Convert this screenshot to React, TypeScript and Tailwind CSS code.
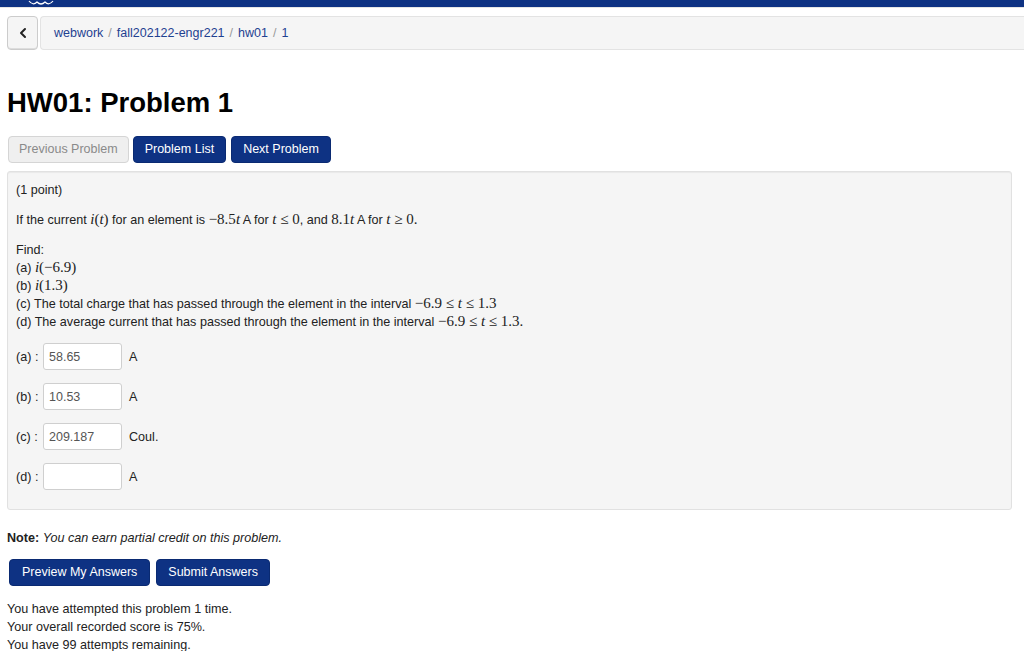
import { ChevronLeft } from 'lucide-react'

const sans = { fontFamily: '"Liberation Sans", Arial, sans-serif' }

function M({ children }: { children: React.ReactNode }) {
  return (
    <span className="text-[15px] leading-[12px]" style={{ fontFamily: '"Liberation Serif", "Times New Roman", serif' }}>
      {children}
    </span>
  )
}

function I({ children }: { children: React.ReactNode }) {
  return <i>{children}</i>
}

function BlueButton({ label, className = '' }: { label: string; className?: string }) {
  return (
    <button
      className={`h-[27px] rounded-[4px] border border-[#0a2a72] bg-[#0e3283] px-[11px] text-[12.5px] text-white ${className}`}
    >
      {label}
    </button>
  )
}

function AnswerRow({ label, value, unit }: { label: string; value: string; unit: string }) {
  return (
    <div className="flex items-center">
      <span className="w-[27px]">{label}</span>
      <div className="flex h-[27px] w-[79px] items-center rounded-[3px] border border-[#cfcfcf] bg-white px-[5px] text-[12.5px] text-[#555]">
        {value}
      </div>
      <span className="ml-[7px]">{unit}</span>
    </div>
  )
}

export default function App() {
  return (
    <div className="min-h-[651px] bg-white text-[12.6px] text-[#222]" style={sans}>
      <div className="relative h-[7px] bg-[#0e3283]">
        <svg className="absolute left-[28px] top-0" width="28" height="6" viewBox="0 0 28 6">
          <path d="M1 1 Q5 6 9 2 Q13 6 17 2 Q21 6 25 1" fill="none" stroke="#fff" strokeWidth="1.2" />
        </svg>
      </div>
      <div className="h-px bg-[#e5e5e5]" />

      <div className="mt-[8px] flex h-[34px] pl-[7px]">
        <button className="flex w-[31px] items-center justify-center rounded-[4px] border border-[#ccc] bg-[#f5f5f5] shadow-[inset_0_-1px_0_#ddd]">
          <ChevronLeft size={16} strokeWidth={3} className="text-[#222]" />
        </button>
        <div className="ml-[2px] flex flex-1 items-center rounded-l-[4px] border border-r-0 border-[#e3e3e3] bg-[#f5f5f5] pl-[13px] text-[12.5px] text-[#5a5a5a]">
          <span className="text-[#1f4191]">webwork</span>
          <span className="mx-[5px] text-[#999]">/</span>
          <span className="text-[#1f4191]">fall202122-engr221</span>
          <span className="mx-[5px] text-[#999]">/</span>
          <span className="text-[#1f4191]">hw01</span>
          <span className="mx-[5px] text-[#999]">/</span>
          <span className="text-[#1f4191]">1</span>
        </div>
      </div>

      <h1 className="ml-[7px] mt-[38px] text-[27.5px] font-bold leading-[30px] text-black">HW01: Problem 1</h1>

      <div className="ml-[8px] mt-[18px] flex gap-[4px]">
        <button className="h-[27px] rounded-[4px] border border-[#d5d5d5] bg-[#efefef] px-[10px] text-[12.5px] text-[#8a8a8a]">
          Previous Problem
        </button>
        <BlueButton label="Problem List" />
        <BlueButton label="Next Problem" className="ml-px" />
      </div>

      <div className="mx-[7px] mt-[8px] mr-[12px] h-[339px] rounded-[3px] border border-[#e1e1e1] bg-[#f5f5f5] px-[8px] pt-[9px] leading-[18px] shadow-[inset_0_1px_1px_rgba(0,0,0,0.05)]">
        <p>(1 point)</p>
        <p className="mt-[12px]">
          If the current <M><I>i</I>(<I>t</I>)</M> for an element is <M>−8.5<I>t</I></M> A for <M><I>t</I> ≤ 0</M>, and{' '}
          <M>8.1<I>t</I></M> A for <M><I>t</I> ≥ 0.</M>
        </p>
        <p className="mt-[12px]">Find:</p>
        <p>(a) <M><I>i</I>(−6.9)</M></p>
        <p>(b) <M><I>i</I>(1.3)</M></p>
        <p>
          (c) The total charge that has passed through the element in the interval <M>−6.9 ≤ <I>t</I> ≤ 1.3</M>
        </p>
        <p>
          (d) The average current that has passed through the element in the interval <M>−6.9 ≤ <I>t</I> ≤ 1.3.</M>
        </p>
        <div className="mt-[12px] flex flex-col gap-[13px]">
          <AnswerRow label="(a) :" value="58.65" unit="A" />
          <AnswerRow label="(b) :" value="10.53" unit="A" />
          <AnswerRow label="(c) :" value="209.187" unit="Coul." />
          <AnswerRow label="(d) :" value="" unit="A" />
        </div>
      </div>

      <p className="ml-[7px] mt-[19px]">
        <b>Note:</b> <i>You can earn partial credit on this problem.</i>
      </p>

      <div className="ml-[9px] mt-[11px] flex gap-[6px]">
        <BlueButton label="Preview My Answers" className="px-[12px]" />
        <BlueButton label="Submit Answers" />
      </div>

      <div className="ml-[7px] mt-[14px] leading-[18px]">
        <p>You have attempted this problem 1 time.</p>
        <p>Your overall recorded score is 75%.</p>
        <p>You have 99 attempts remaining.</p>
      </div>
    </div>
  )
}
